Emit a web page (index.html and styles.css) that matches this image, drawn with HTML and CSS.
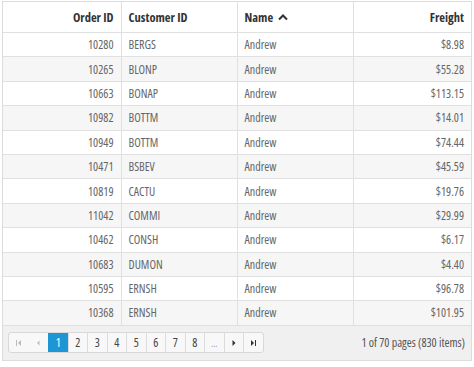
FILE: index.html
```html
<!DOCTYPE html>
<html>
<head>
<meta charset="utf-8">
<link rel="stylesheet" href="styles.css">
</head>
<body>
<div class="grid">
  <table class="table">
    <colgroup><col class="c1"><col class="c2"><col class="c3"><col class="c4"></colgroup>
    <thead>
      <tr>
        <th class="r">Order ID</th>
        <th>Customer ID</th>
        <th><span class="sorted">Name <svg class="sort" width="10" height="8" viewBox="0 0 10 8"><path d="M1 6.5 L5 2.5 L9 6.5" fill="none" stroke="#333" stroke-width="2"/></svg></span></th>
        <th class="r">Freight</th>
      </tr>
    </thead>
    <tbody>
      <tr><td class="r">10280</td><td>BERGS</td><td>Andrew</td><td class="r">$8.98</td></tr>
      <tr class="alt"><td class="r">10265</td><td>BLONP</td><td>Andrew</td><td class="r">$55.28</td></tr>
      <tr><td class="r">10663</td><td>BONAP</td><td>Andrew</td><td class="r">$113.15</td></tr>
      <tr class="alt"><td class="r">10982</td><td>BOTTM</td><td>Andrew</td><td class="r">$14.01</td></tr>
      <tr><td class="r">10949</td><td>BOTTM</td><td>Andrew</td><td class="r">$74.44</td></tr>
      <tr class="alt"><td class="r">10471</td><td>BSBEV</td><td>Andrew</td><td class="r">$45.59</td></tr>
      <tr><td class="r">10819</td><td>CACTU</td><td>Andrew</td><td class="r">$19.76</td></tr>
      <tr class="alt"><td class="r">11042</td><td>COMMI</td><td>Andrew</td><td class="r">$29.99</td></tr>
      <tr><td class="r">10462</td><td>CONSH</td><td>Andrew</td><td class="r">$6.17</td></tr>
      <tr class="alt"><td class="r">10683</td><td>DUMON</td><td>Andrew</td><td class="r">$4.40</td></tr>
      <tr><td class="r">10595</td><td>ERNSH</td><td>Andrew</td><td class="r">$96.78</td></tr>
      <tr class="alt"><td class="r">10368</td><td>ERNSH</td><td>Andrew</td><td class="r">$101.95</td></tr>
    </tbody>
  </table>
  <div class="pager">
    <div class="pages">
      <span class="pbtn dis"><svg width="8" height="8" viewBox="0 0 8 8"><rect x="1" y="1" width="1" height="6" fill="#bbb"/><path d="M6 1 L3 4 L6 7 Z" fill="#bbb"/></svg></span>
      <span class="pbtn dis"><svg width="8" height="8" viewBox="0 0 8 8"><path d="M5.5 1.5 L3 4 L5.5 6.5 Z" fill="#bbb"/></svg></span>
      <span class="pbtn cur">1</span>
      <span class="pbtn">2</span>
      <span class="pbtn">3</span>
      <span class="pbtn">4</span>
      <span class="pbtn">5</span>
      <span class="pbtn">6</span>
      <span class="pbtn">7</span>
      <span class="pbtn">8</span>
      <span class="pbtn more">...</span>
      <span class="pbtn"><svg width="8" height="8" viewBox="0 0 8 8"><path d="M2.5 1 L5.5 4 L2.5 7 Z" fill="#333"/></svg></span>
      <span class="pbtn"><svg width="8" height="8" viewBox="0 0 8 8"><path d="M2 1 L5 4 L2 7 Z" fill="#333"/><rect x="6" y="1" width="1" height="6" fill="#333"/></svg></span>
    </div>
    <div class="info">1 of 70 pages (830 items)</div>
  </div>
</div>
</body>
</html>
```
FILE: styles.css
```css
html, body {
  margin: 0;
  padding: 0;
  background: #fff;
}
body {
  padding: 1px 2px 0 2px;
  font-family: "Open Sans", "Noto Sans", sans-serif;
  font-stretch: 86%;
  color: #333;
}
.grid {
  width: 470px;
  border: 1px solid #dcdcdc;
  box-sizing: border-box;
}
.table {
  width: 100%;
  border-collapse: collapse;
  table-layout: fixed;
}
.c1 { width: 118px; }
.c2 { width: 116px; }
.c3 { width: 116px; }
.c4 { width: auto; }
th {
  height: 30px;
  font-size: 12.5px;
  font-weight: 700;
  text-align: left;
  padding: 0 7px;
  color: #333;
  border-left: 1px solid #e0e0e0;
  border-bottom: 1px solid #e0e0e0;
  background: #fff;
}
td {
  height: 23.4px;
  font-size: 12px;
  color: #666;
  padding: 0 7px;
  border-left: 1px solid #e0e0e0;
  border-bottom: 1px solid #e0e0e0;
}
th:first-child, td:first-child { border-left: none; }
.r { text-align: right; }
tr.alt td { background: #f6f6f6; }
.sorted { display: inline-flex; align-items: center; gap: 5px; }
.sort { display: block; }
.pager {
  display: flex;
  align-items: center;
  justify-content: space-between;
  background: #f0f0f0;
  height: 34px;
  padding: 0 6px 0 5px;
}
.pages {
  display: flex;
  border: 1px solid #d8d8d8;
  border-radius: 3px;
  background: #f8f8f8;
  overflow: hidden;
}
.pbtn {
  width: 19.5px;
  height: 19px;
  display: flex;
  align-items: center;
  justify-content: center;
  font-size: 12px;
  color: #444;
  border-left: 1px solid #dcdcdc;
  box-sizing: border-box;
}
.pbtn:first-child { border-left: none; }
.pbtn.cur { background: #1d96d6; color: #fff; border-color: #1d96d6; }
.pbtn.dis { border-left: none; }
.pbtn.more { color: #999; font-size: 10px; }
.info {
  font-size: 12px;
  color: #555;
}
```
